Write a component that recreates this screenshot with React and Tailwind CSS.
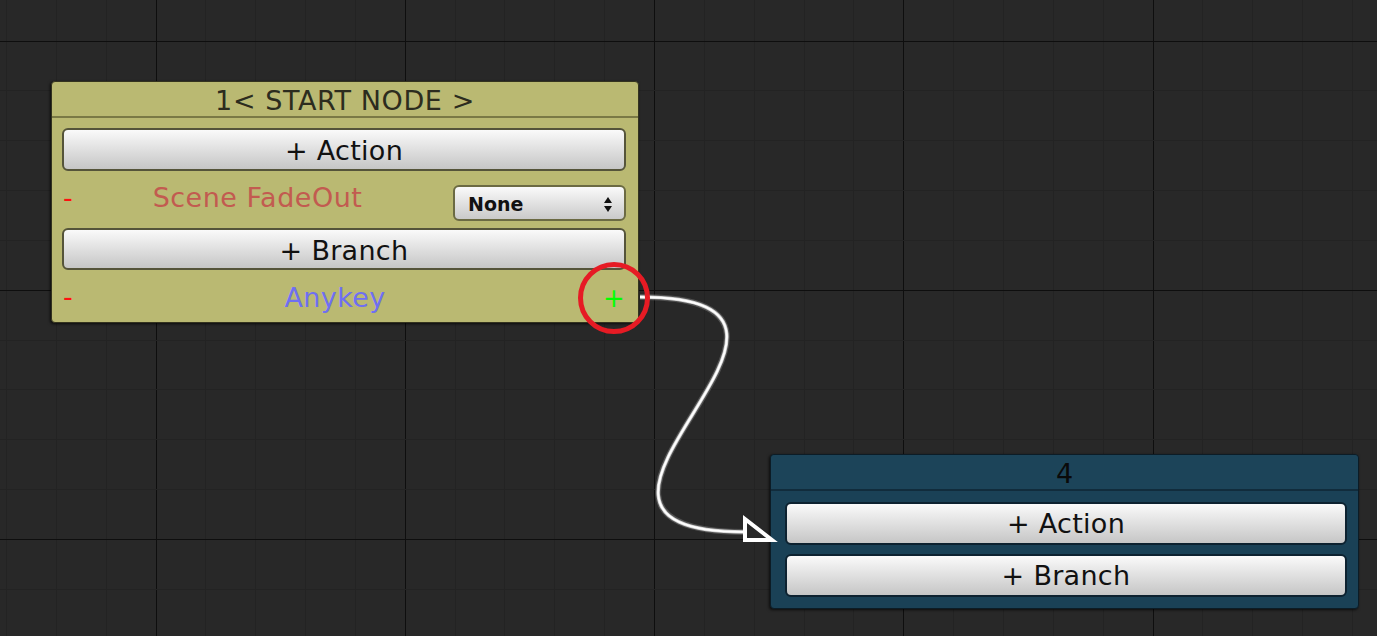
import React from "react";

const FONT = { fontFamily: '"DejaVu Sans", "Liberation Sans", sans-serif' };

function Grid() {
  const lines = [];
  for (let i = -4; i < 26; i++) {
    const x = Math.round(155.5 + i * 49.85) + 0.5;
    if (x < 0 || x > 1377) continue;
    const major = ((i % 5) + 5) % 5 === 0;
    lines.push(
      <line key={"v" + i} x1={x} y1={0} x2={x} y2={636} stroke={major ? "#0e0e0e" : "#232323"} strokeWidth={major ? 1.5 : 1} />
    );
  }
  for (let j = -1; j < 14; j++) {
    const y = Math.round(40.5 + j * 49.85) + 0.5;
    if (y < 0 || y > 636) continue;
    const major = ((j % 5) + 5) % 5 === 0;
    lines.push(
      <line key={"h" + j} x1={0} y1={y} x2={1377} y2={y} stroke={major ? "#0e0e0e" : "#232323"} strokeWidth={major ? 1.5 : 1} />
    );
  }
  return (
    <svg className="absolute inset-0" width="1377" height="636" shapeRendering="crispEdges">
      {lines}
    </svg>
  );
}

function Btn({ label, border, pad }) {
  return (
    <div
      className={`flex-1 min-h-0 flex items-center justify-center ${pad} leading-[30px] rounded-[6px] border-2 ${border} bg-linear-to-b from-[#fafafa] to-[#c6c6c6] text-[27px] tracking-[0.3px] text-[#111]`}
    >
      {label}
    </div>
  );
}

function Overlay() {
  const d = "M640 297 C890 297 495 532 745 532";
  return (
    <svg className="absolute inset-0 pointer-events-none" width="1377" height="636">
      <path d={d} fill="none" stroke="#7a7a7a" strokeOpacity="0.5" strokeWidth="6" />
      <path d={d} fill="none" stroke="#cfcfcf" strokeWidth="3.5" />
      <path d={d} fill="none" stroke="#ffffff" strokeWidth="2" />
      <path d="M745 519 L745 540 L772 540 Z" fill="#282828" stroke="#ffffff" strokeWidth="4" strokeLinejoin="miter" />
      <circle cx="614" cy="298" r="33.5" fill="none" stroke="#e61b24" strokeWidth="5" />
    </svg>
  );
}

export default function App() {
  return (
    <div className="relative w-[1377px] h-[636px] overflow-hidden bg-[#282828]" style={FONT}>
      <Grid />

      {/* Start node */}
      <div className="absolute left-[51px] top-[81px] w-[588px] h-[242px] flex flex-col rounded-[4px] border border-[#34331f] bg-[#bab972] shadow-[-1px_1px_3px_rgba(0,0,0,0.7)]">
        <div className="h-[36px] flex items-center justify-center pt-[3px] border-b-2 border-[#7a7945] text-[27px] tracking-[0.6px] text-[#2c2c1e] leading-none">
          1&lt; START NODE &gt;
        </div>
        <div className="flex-1 flex flex-col pl-[10px] pr-[12px] pt-[10px]">
          <div className="h-[43px] flex flex-col">
            <Btn label="+ Action" border="border-[#55543a]" pad="pt-[2px]" />
          </div>
          <div className="relative h-[57px] flex">
            <span className="absolute left-[1px] top-[11px] text-[27px] leading-[32px] text-[#ff1010]">-</span>
            <div className="flex-1 flex justify-center pt-[11px] text-[27px] tracking-[0.5px] leading-[32px] text-[#c25b50]">Scene FadeOut</div>
            <div className="mt-[14px] w-[173px] h-[36px] flex items-center justify-between pl-[13px] pr-[11px] pt-[2px] rounded-[6px] border-2 border-[#6b6a43] bg-linear-to-b from-[#fafafa] to-[#cacaca] text-[19px] font-bold text-[#111]">
              <span>None</span>
              <svg width="10" height="18" viewBox="0 0 10 18">
                <path d="M5 2 L9 8 L1 8 Z" fill="#111" />
                <path d="M5 17 L9 11 L1 11 Z" fill="#111" />
              </svg>
            </div>
          </div>
          <div className="h-[42px] flex flex-col">
            <Btn label="+ Branch" border="border-[#55543a]" pad="pt-[3px]" />
          </div>
          <div className="relative flex-1 flex items-center pt-[4px]">
            <span className="absolute left-[1px] top-[11px] text-[27px] leading-[32px] text-[#ff1010]">-</span>
            <div className="flex-1 flex justify-center text-[27px] tracking-[0.4px] leading-[32px] text-[#6f6ff2] pl-[6px]">Anykey</div>
            <span className="w-[24px] text-[26px] leading-[32px] text-[#00ff00] text-center">+</span>
          </div>
        </div>
      </div>

      {/* Node 4 */}
      <div className="absolute left-[770px] top-[454px] w-[589px] h-[155px] flex flex-col rounded-[4px] border border-[#0c1c26] bg-[#1a4156] shadow-[-1px_1px_3px_rgba(0,0,0,0.7)]">
        <div className="h-[36px] flex items-center justify-center pt-[3px] border-b-2 border-[#112c3c] bg-[#1c4459] rounded-t-[4px] text-[27px] text-[#0a0a0a] leading-none">
          4
        </div>
        <div className="flex-1 flex flex-col gap-[9px] pl-[14px] pr-[11px] pt-[11px] pb-[11px]">
          <div className="h-[43px] flex flex-col">
            <Btn label="+ Action" border="border-[#0d2230]" pad="pt-0" />
          </div>
          <div className="h-[43px] flex flex-col">
            <Btn label="+ Branch" border="border-[#0d2230]" pad="pt-0" />
          </div>
        </div>
      </div>

      <Overlay />
    </div>
  );
}
